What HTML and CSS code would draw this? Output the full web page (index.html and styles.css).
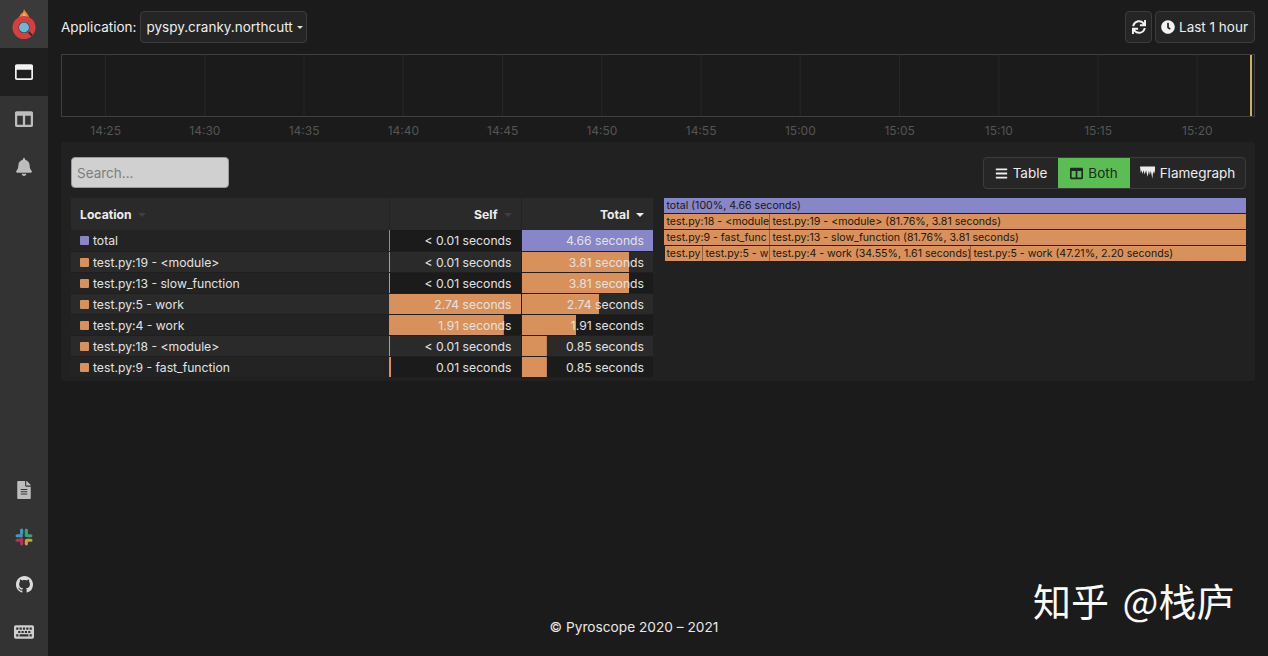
FILE: index.html
```html
<!DOCTYPE html>
<html lang="en">
<head>
<meta charset="utf-8">
<title>Pyroscope</title>
<link rel="stylesheet" href="styles.css">
</head>
<body>
<div class="app">
  <nav class="sidebar">
    <div class="nav-item logo">
      <svg class="logo-icon" viewBox="0 0 24 30"><path d="M12 0c.8 2.500 5 5 5.500 10 .2 2-11 2-11 0 .2-2.500 2-3.500 2.500-5.500C10.300 5 11.500 2.500 12 0z" fill="#e8872c"/><path d="M12 3c.5 2.500 3 4 3.300 7.500l-6 .3C9.500 8 11 7 12 3z" fill="#f2b06a"/><circle cx="12" cy="18.500" r="8.500" fill="#26343c" stroke="#d5403f" stroke-width="6"/><circle cx="12" cy="18.500" r="5" fill="#62bddb"/><path d="M16.500 23l3.500 3.500" stroke="#2b2b2b" stroke-width="1.800"/></svg>
    </div>
    <div class="nav-item active"><svg class="ic ic-w" viewBox="0 0 512 512"><path d="M464 32H48C21.500 32 0 53.500 0 80v352c0 26.500 21.500 48 48 48h416c26.500 0 48-21.500 48-48V80c0-26.500-21.500-48-48-48zm0 394c0 3.300-2.700 6-6 6H54c-3.300 0-6-2.700-6-6V192h416v234z"/></svg></div>
    <div class="nav-item"><svg class="ic" viewBox="0 0 512 512"><path d="M464 32H48C21.490 32 0 53.490 0 80v352c0 26.510 21.490 48 48 48h416c26.510 0 48-21.490 48-48V80c0-26.510-21.490-48-48-48zM224 416H64V160h160v256zm224 0H288V160h160v256z"/></svg></div>
    <div class="nav-item"><svg class="ic" viewBox="0 0 448 512"><path d="M224 512c35.320 0 63.970-28.650 63.970-64H160.030c0 35.350 28.650 64 63.970 64zm215.390-149.710c-19.320-20.760-55.470-51.990-55.470-154.290 0-77.700-54.480-139.900-127.940-155.160V32c0-17.670-14.320-32-31.980-32s-31.980 14.330-31.980 32v20.840C118.560 68.100 64.080 130.300 64.080 208c0 102.300-36.150 133.530-55.470 154.290-6 6.450-8.660 14.160-8.610 21.710.11 16.400 12.980 32 32.100 32h383.800c19.120 0 32-15.600 32.100-32 .05-7.550-2.610-15.270-8.610-21.710z"/></svg></div>
    <div class="nav-item push"><svg class="ic" viewBox="0 0 384 512"><path d="M224 136V0H24C10.700 0 0 10.700 0 24v464c0 13.300 10.700 24 24 24h336c13.300 0 24-10.700 24-24V160H248c-13.200 0-24-10.800-24-24zm64 236c0 6.600-5.400 12-12 12H108c-6.600 0-12-5.400-12-12v-8c0-6.600 5.400-12 12-12h168c6.600 0 12 5.400 12 12v8zm0-64c0 6.600-5.400 12-12 12H108c-6.600 0-12-5.400-12-12v-8c0-6.600 5.400-12 12-12h168c6.600 0 12 5.400 12 12v8zm0-72v8c0 6.600-5.400 12-12 12H108c-6.600 0-12-5.400-12-12v-8c0-6.600 5.400-12 12-12h168c6.600 0 12 5.400 12 12zm96-114.100v6.100H256V0h6.100c6.400 0 12.500 2.500 17 7l97.900 98c4.500 4.500 7 10.600 7 16.900z"/></svg></div>
    <div class="nav-item"><svg class="ic" viewBox="0 0 16 16"><rect x="0.500" y="5.500" width="6.500" height="2.800" rx="1.400" fill="#3f9cc0"/><rect x="4.500" y="0.500" width="2.800" height="5.500" rx="1.400" fill="#3f9cc0"/><rect x="8.700" y="0.500" width="2.800" height="7.500" rx="1.400" fill="#3aa07a"/><rect x="10" y="5.500" width="5.500" height="2.800" rx="1.400" fill="#3aa07a"/><rect x="9" y="9.500" width="6.500" height="2.800" rx="1.400" fill="#c9a03a"/><rect x="8.700" y="10" width="2.800" height="5.500" rx="1.400" fill="#c9a03a"/><rect x="4.500" y="8.500" width="2.800" height="7" rx="1.400" fill="#b53358"/><rect x="0.500" y="9.500" width="6.500" height="2.800" rx="1.400" fill="#b53358"/></svg></div>
    <div class="nav-item"><svg class="ic ic-git" viewBox="0 0 16 16"><path d="M8 0C3.580 0 0 3.580 0 8c0 3.540 2.290 6.530 5.470 7.590.4.070.55-.17.55-.38 0-.19-.01-.82-.01-1.490-2.010.37-2.530-.49-2.690-.94-.09-.23-.48-.94-.82-1.130-.28-.15-.68-.52-.01-.53.63-.01 1.080.58 1.230.82.72 1.210 1.870.87 2.330.66.070-.52.28-.87.51-1.070-1.780-.2-3.640-.89-3.640-3.950 0-.87.31-1.590.82-2.150-.08-.2-.36-1.020.08-2.120 0 0 .67-.21 2.200.82.64-.18 1.320-.27 2-.27.68 0 1.360.09 2 .27 1.530-1.040 2.200-.82 2.200-.82.44 1.100.16 1.920.08 2.120.51.56.82 1.270.82 2.150 0 3.070-1.870 3.750-3.650 3.950.29.25.54.73.54 1.480 0 1.070-.01 1.930-.01 2.200 0 .21.15.46.55.38A8.013 8.013 0 0016 8c0-4.420-3.580-8-8-8z"/></svg></div>
    <div class="nav-item"><svg class="ic ic-kbd" viewBox="0 0 576 512"><path fill-rule="evenodd" d="M48 64h480a48 48 0 0 1 48 48v288a48 48 0 0 1-48 48H48a48 48 0 0 1-48-48V112a48 48 0 0 1 48-48zM64 128v64h64v-64zm96 0v64h64v-64zm96 0v64h64v-64zm96 0v64h64v-64zm96 0v64h64v-64zM120 224v64h64v-64zm96 0v64h64v-64zm96 0v64h64v-64zm96 0v64h64v-64zM64 320v64h64v-64zm96 0v64h256v-64zm288 0v64h64v-64z"/></svg></div>
  </nav>

  <main class="main">
    <header class="toolbar">
      <label class="app-label">Application:</label>
      <button class="btn app-select">pyspy.cranky.northcutt<span class="caret"></span></button>
      <div class="toolbar-right">
        <button class="btn btn-icon"><svg class="btn-ic" viewBox="0 0 512 512"><path d="M440.650 12.570l4 82.770A247.160 247.160 0 0 0 255.830 8C134.730 8 33.910 94.920 12.290 209.820A12 12 0 0 0 24.090 224h49.050a12 12 0 0 0 11.670-9.260 175.910 175.910 0 0 1 317-56.940l-101.460-4.860a12 12 0 0 0-12.570 12v47.410a12 12 0 0 0 12 12H500a12 12 0 0 0 12-12V12a12 12 0 0 0-12-12h-47.370a12 12 0 0 0-11.980 12.570zM255.830 432a175.610 175.610 0 0 1-146-77.800l101.800 4.870a12 12 0 0 0 12.570-12v-47.400a12 12 0 0 0-12-12H12a12 12 0 0 0-12 12V500a12 12 0 0 0 12 12h47.350a12 12 0 0 0 12-12.600l-4.150-82.570A247.170 247.170 0 0 0 255.830 504c121.110 0 221.930-86.920 243.550-201.820a12 12 0 0 0-11.800-14.180h-49.050a12 12 0 0 0-11.670 9.260A175.860 175.860 0 0 1 255.830 432z"/></svg></button>
        <button class="btn btn-time"><svg class="btn-ic" viewBox="0 0 512 512"><path d="M256,8C119,8,8,119,8,256S119,504,256,504,504,393,504,256,393,8,256,8Zm92.490,313h0l-20,25a16,16,0,0,1-22.490,2.500h0l-67-49.720a40,40,0,0,1-15-31.230V112a16,16,0,0,1,16-16h32a16,16,0,0,1,16,16V256l58,42.500A16,16,0,0,1,348.490,321Z"/></svg>Last 1 hour</button>
      </div>
    </header>

    <div class="timeline"><span class="now"></span></div>
    <div class="ticks">
      <span>14:25</span><span>14:30</span><span>14:35</span><span>14:40</span><span>14:45</span><span>14:50</span><span>14:55</span><span>15:00</span><span>15:05</span><span>15:10</span><span>15:15</span><span>15:20</span>
    </div>

    <section class="panel">
      <div class="panel-bar">
        <input class="search" type="text" placeholder="Search...">
        <div class="view-group">
          <button class="view"><svg class="view-ic" viewBox="0 0 448 512"><path d="M16 132h416c8.837 0 16-7.163 16-16V76c0-8.837-7.163-16-16-16H16C7.163 60 0 67.163 0 76v40c0 8.837 7.163 16 16 16zm0 160h416c8.837 0 16-7.163 16-16v-40c0-8.837-7.163-16-16-16H16c-8.837 0-16 7.163-16 16v40c0 8.837 7.163 16 16 16zm0 160h416c8.837 0 16-7.163 16-16v-40c0-8.837-7.163-16-16-16H16c-8.837 0-16 7.163-16 16v40c0 8.837 7.163 16 16 16z"/></svg>Table</button>
          <button class="view view-on"><svg class="view-ic" viewBox="0 0 512 512"><path d="M464 32H48C21.490 32 0 53.490 0 80v352c0 26.510 21.490 48 48 48h416c26.510 0 48-21.490 48-48V80c0-26.510-21.490-48-48-48zM224 416H64V160h160v256zm224 0H288V160h160v256z"/></svg>Both</button>
          <button class="view"><svg class="view-ic view-ic-flame" viewBox="0 0 16 14"><path d="M0 0h16v4l-1 4-1-3-.8 8-1.700-8.500L10.500 9 9.500 4.500 8 11 6.500 4 5 8.500 3.800 4 2.700 8 1.700 4 .8 7z"/></svg>Flamegraph</button>
        </div>
      </div>
      <div class="panel-body">
        <table class="tbl">
          <thead>
            <tr><th class="loc">Location<span class="sort"></span></th><th class="num">Self<span class="sort"></span></th><th class="num">Total<span class="sort sort-on"></span></th></tr>
          </thead>
          <tbody>
            <tr class="p"><td class="loc"><i></i>total</td><td class="num bar" style="--w:1px">&lt; 0.01 seconds</td><td class="num bar" style="--w:100%">4.66 seconds</td></tr>
            <tr><td class="loc"><i></i>test.py:19 - &lt;module&gt;</td><td class="num bar" style="--w:1px">&lt; 0.01 seconds</td><td class="num bar" style="--w:82%">3.81 seconds</td></tr>
            <tr><td class="loc"><i></i>test.py:13 - slow_function</td><td class="num bar" style="--w:1px">&lt; 0.01 seconds</td><td class="num bar" style="--w:82%">3.81 seconds</td></tr>
            <tr><td class="loc"><i></i>test.py:5 - work</td><td class="num bar" style="--w:100%">2.74 seconds</td><td class="num bar" style="--w:59%">2.74 seconds</td></tr>
            <tr><td class="loc"><i></i>test.py:4 - work</td><td class="num bar" style="--w:87%">1.91 seconds</td><td class="num bar" style="--w:41.500%">1.91 seconds</td></tr>
            <tr><td class="loc"><i></i>test.py:18 - &lt;module&gt;</td><td class="num bar" style="--w:1px">&lt; 0.01 seconds</td><td class="num bar" style="--w:19%">0.85 seconds</td></tr>
            <tr><td class="loc"><i></i>test.py:9 - fast_function</td><td class="num bar" style="--w:2px">0.01 seconds</td><td class="num bar" style="--w:19%">0.85 seconds</td></tr>
          </tbody>
        </table>
        <div class="flame">
          <div class="f-row f-total"><span class="f-fill">total (100%, 4.66 seconds)</span></div>
          <div class="f-row"><span class="f-a">test.py:18 - &lt;module</span><span class="f-fill">test.py:19 - &lt;module&gt; (81.76%, 3.81 seconds)</span></div>
          <div class="f-row"><span class="f-a">test.py:9 - fast_func</span><span class="f-fill">test.py:13 - slow_function (81.76%, 3.81 seconds)</span></div>
          <div class="f-row f-last"><span class="f-b">test.py</span><span class="f-c">test.py:5 - w</span><span class="f-d">test.py:4 - work (34.55%, 1.61 seconds)</span><span class="f-fill">test.py:5 - work (47.21%, 2.20 seconds)</span></div>
        </div>
      </div>
    </section>

    <footer class="footer">© Pyroscope 2020 – 2021</footer>
  </main>
</div>
<div class="watermark">知乎 @栈庐</div>
</body>
</html>
```
FILE: styles.css
```css
* { box-sizing: border-box; }
html, body { margin: 0; height: 656px; overflow: hidden; }
body { background: #1b1b1b; color: #e6e6e6; font: 13.500px/20px Inter, "Liberation Sans", sans-serif; position: relative; }
.app { display: flex; height: 656px; }

.sidebar { width: 48px; flex: none; background: #333333; display: flex; flex-direction: column; }
.nav-item { height: 47.500px; flex: none; display: flex; align-items: center; justify-content: center; }
.nav-item.logo { background: #3a3a3a; height: 48px; }
.nav-item.active { background: #1f1f1f; }
.nav-item.push { margin-top: auto; }
.logo-icon { width: 24px; height: 30px; margin-top: -1px; }
.ic { width: 18px; height: 18px; fill: #bdbdbd; display: block; }
.ic-w { fill: #f2f2f2; }
.ic-git { width: 17px; height: 17px; fill: #dcdcdc; }
.ic-kbd { width: 20px; height: 20px; fill: #cfcfcf; }

.main { flex: 1; min-width: 0; padding: 11px 13px 0; display: flex; flex-direction: column; }
.toolbar { display: flex; align-items: center; height: 32px; flex: none; }
.app-label { margin-right: 4px; color: #f0f0f0; }
.btn { height: 32px; background: #252525; border: 1px solid #3c3c3c; border-radius: 4px; color: #ededed; font: inherit; padding: 0 5px; display: flex; align-items: center; white-space: nowrap; }
.app-select { width: 167px; }
.caret { margin-left: 4px; border: 3px solid transparent; border-top-color: #e0e0e0; border-bottom: 0; }
.toolbar-right { margin-left: auto; display: flex; gap: 3px; }
.btn-icon { width: 27px; justify-content: center; padding: 0; }
.btn-ic { width: 14px; height: 14px; fill: #f2f2f2; flex: none; }
.btn-time { width: 100px; padding-left: 5px; gap: 4px; }

.timeline { margin-top: 11px; height: 63px; flex: none; position: relative; border: 1px solid #3f3f3f; background-color: #1b1b1b; background-image: linear-gradient(90deg, #262626 1px, transparent 1px); background-size: 99.250px 100%; background-position: 43px 0; }
.now { position: absolute; right: 2px; top: 0; bottom: 0; width: 2px; background: #cdb05a; }
.ticks { display: flex; height: 25px; flex: none; margin-left: -5px; font-size: 12px; line-height: 27px; color: #555555; }
.ticks span { width: 99.250px; flex: none; text-align: center; }

.panel { background: #212121; height: 239px; flex: none; padding: 15px 9px 0 10px; border-radius: 2px; }
.panel-bar { display: flex; justify-content: space-between; align-items: flex-start; height: 41px; }
.search { width: 158px; height: 31px; background: #d0d0d0; border: 1px solid #9a9a9a; border-radius: 4px; padding: 0 5px; font: inherit; outline: 0; }
.search::placeholder { color: #7d7d7d; opacity: 1; }
.view-group { display: flex; height: 32px; border: 1px solid #3c3c3c; border-radius: 4px; background: #262626; }
.view { border: 0; background: none; color: #ededed; font: inherit; height: 30px; padding: 0; display: flex; align-items: center; justify-content: center; gap: 5px; }
.view:nth-child(1) { width: 74px; }
.view:nth-child(2) { width: 72px; }
.view:nth-child(3) { width: 115px; }
.view-on { background: #5cbd55; color: #1d2a1c; }
.view-ic { width: 13px; height: 13px; fill: currentColor; flex: none; }
.view-ic-flame { width: 15px; height: 14px; }

.panel-body { display: flex; gap: 11px; align-items: flex-start; }
.tbl { width: 582px; flex: none; border-collapse: collapse; table-layout: fixed; font-size: 12.200px; }
.tbl th { height: 32px; background: #2a2a2a; font-weight: 700; color: #ececec; text-align: left; padding: 1px 9px 0; border-right: 1px solid #232323; }
.tbl th.loc { width: 318px; }
.tbl th.num { text-align: right; width: 132px; }
.tbl td { height: 21px; padding: 1px 9px 0; white-space: nowrap; line-height: 19px; border-bottom: 1px solid #1f1f1f; background-clip: padding-box; color: #e2e2e2; }
.tbl tbody tr:nth-child(odd) td { background-color: #1b1b1b; }
.tbl tbody tr:nth-child(odd) td.loc { background-color: #232323; }
.tbl tbody tr:nth-child(even) td { background-color: #2a2a2a; }
.tbl td.loc i { display: inline-block; width: 9px; height: 9px; margin-right: 4px; background: #d8915a; border-radius: 1px; }
.tbl .p td.loc i { background: #8686c8; }
.tbl td.num { text-align: right; }
.tbl td.num + td.num { border-left: 1px solid #1f1f1f; }
.tbl td.bar { background-image: linear-gradient(#d8915a, #d8915a); background-repeat: no-repeat; background-size: var(--w) 100%; }
.tbl .p td.bar { background-image: linear-gradient(#8686c8, #8686c8); }
.sort { display: inline-block; margin-left: 6px; vertical-align: 2px; border: 4px solid transparent; border-top-color: #3f3f3f; border-bottom: 0; }
.sort-on { border-top-color: #ececec; }

.flame { flex: 1; min-width: 0; margin-left: -1px; font-size: 10.600px; line-height: 15px; color: #1d1712; }
.f-row { display: flex; height: 16px; background: #d8915a; border-bottom: 1px solid #1f1f1f; }
.f-row span { padding-left: 3px; overflow: hidden; white-space: nowrap; border-right: 1px solid #8e6240; }
.f-row span.f-fill { flex: 1; border-right: 0; min-width: 0; }
.f-total { background: #8686c8; }
.f-a { width: 106px; flex: none; }
.f-last { background: linear-gradient(90deg, #212121 1px, #d8915a 1px); }
.f-b { width: 38px; flex: none; margin-left: 1px; padding-left: 2px !important; }
.f-c { width: 67px; flex: none; }
.f-d { width: 201px; flex: none; }

.footer { margin: auto 0 19px -48px; text-align: center; font-size: 13.700px; color: #e8e8e8; }
.watermark { position: absolute; left: 1033px; top: 576px; font: 38px/48px "Noto Sans CJK SC", sans-serif; word-spacing: 5px; color: #fafafa; white-space: nowrap; }
```
